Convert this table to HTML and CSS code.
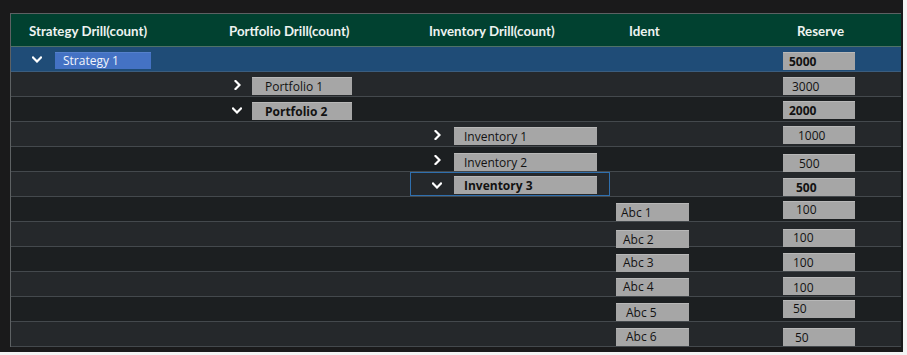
FILE: index.html
```html
<!DOCTYPE html>
<html>
<head>
<meta charset="utf-8">
<link rel="stylesheet" href="styles.css">
</head>
<body>
<div class="frame">
  <div class="grid">
    <div class="row head">
      <div class="c c1"><span class="htext">Strategy Drill(count)</span></div>
      <div class="c c2"><span class="htext">Portfolio Drill(count)</span></div>
      <div class="c c3"><span class="htext">Inventory Drill(count)</span></div>
      <div class="c c4"><span class="htext">Ident</span></div>
      <div class="c c5"><span class="htext">Reserve</span></div>
    </div>

    <div class="row strat">
      <div class="c c1"><span class="chev"><svg width="10" height="7" viewBox="0 0 10 7"><polyline points="1,1.5 5,5.5 9,1.5"/></svg></span><span class="box sbox">Strategy 1</span></div>
      <div class="c c2"></div>
      <div class="c c3"></div>
      <div class="c c4"></div>
      <div class="c c5"><span class="box rbox o5 b p6">5000</span></div>
    </div>

    <div class="row light">
      <div class="c c1"></div>
      <div class="c c2"><span class="chev"><svg width="7" height="10" viewBox="0 0 7 10"><polyline points="1.5,1 5.5,5 1.5,9"/></svg></span><span class="box pbox">Portfolio 1</span></div>
      <div class="c c3"></div>
      <div class="c c4"></div>
      <div class="c c5"><span class="box rbox o5 p9">3000</span></div>
    </div>

    <div class="row dark">
      <div class="c c1"></div>
      <div class="c c2"><span class="chev"><svg width="10" height="7" viewBox="0 0 10 7"><polyline points="1,1.5 5,5.5 9,1.5"/></svg></span><span class="box pbox b">Portfolio 2</span></div>
      <div class="c c3"></div>
      <div class="c c4"></div>
      <div class="c c5"><span class="box rbox o4 b p6">2000</span></div>
    </div>

    <div class="row light">
      <div class="c c1"></div>
      <div class="c c2"></div>
      <div class="c c3"><span class="chev"><svg width="7" height="10" viewBox="0 0 7 10"><polyline points="1.5,1 5.5,5 1.5,9"/></svg></span><span class="box ibox o5">Inventory 1</span></div>
      <div class="c c4"></div>
      <div class="c c5"><span class="box rbox o4 p15">1000</span></div>
    </div>

    <div class="row dark">
      <div class="c c1"></div>
      <div class="c c2"></div>
      <div class="c c3"><span class="chev"><svg width="7" height="10" viewBox="0 0 7 10"><polyline points="1.5,1 5.5,5 1.5,9"/></svg></span><span class="box ibox o6">Inventory 2</span></div>
      <div class="c c4"></div>
      <div class="c c5"><span class="box rbox o7 p16">500</span></div>
    </div>

    <div class="row light">
      <div class="c c1"></div>
      <div class="c c2"></div>
      <div class="c c3 selected"><span class="chev"><svg width="10" height="7" viewBox="0 0 10 7"><polyline points="1,1.5 5,5.5 9,1.5"/></svg></span><span class="box ibox o4 b">Inventory 3</span></div>
      <div class="c c4"></div>
      <div class="c c5"><span class="box rbox o6 b p13">500</span></div>
    </div>

    <div class="row dark">
      <div class="c c1"></div><div class="c c2"></div><div class="c c3"></div>
      <div class="c c4"><span class="box abox o6 p5">Abc 1</span></div>
      <div class="c c5"><span class="box rbox o4 p13 up">100</span></div>
    </div>
    <div class="row light">
      <div class="c c1"></div><div class="c c2"></div><div class="c c3"></div>
      <div class="c c4"><span class="box abox o8 p7">Abc 2</span></div>
      <div class="c c5"><span class="box rbox o7 p10 up">100</span></div>
    </div>
    <div class="row dark">
      <div class="c c1"></div><div class="c c2"></div><div class="c c3"></div>
      <div class="c c4"><span class="box abox o7 p7 up">Abc 3</span></div>
      <div class="c c5"><span class="box rbox o6 p10">100</span></div>
    </div>
    <div class="row light">
      <div class="c c1"></div><div class="c c2"></div><div class="c c3"></div>
      <div class="c c4"><span class="box abox o6 p7 up">Abc 4</span></div>
      <div class="c c5"><span class="box rbox o5 p10 down">100</span></div>
    </div>
    <div class="row dark">
      <div class="c c1"></div><div class="c c2"></div><div class="c c3"></div>
      <div class="c c4"><span class="box abox o6 p10">Abc 5</span></div>
      <div class="c c5"><span class="box rbox o3 p10 up">50</span></div>
    </div>
    <div class="row light">
      <div class="c c1"></div><div class="c c2"></div><div class="c c3"></div>
      <div class="c c4"><span class="box abox o6 p10 up">Abc 6</span></div>
      <div class="c c5"><span class="box rbox o6 p12">50</span></div>
    </div>
  </div>
</div>
</body>
</html>
```

FILE: styles.css
```css
html, body {
  margin: 0;
  padding: 0;
  background: #f4f4f4;
}

.frame {
  width: 903px;
  height: 352px;
  box-sizing: border-box;
  background: #1a1a1b;
  padding: 13px 2px 0 10px;
  font-family: "Open Sans", "Noto Sans", sans-serif;
}

.grid {
  border-left: 1px solid #5d6163;
  border-top: 1px solid #5d6163;
}

.row {
  display: grid;
  grid-template-columns: 199px 200px 200px 163px 1fr;
  height: 24px;
  border-bottom: 1px solid #44494d;
}

.row.head {
  height: 32px;
  background: #014130;
  border-bottom: 1px solid #4f7266;
}

.row.strat {
  background: #1f4c77;
  border-bottom: 1px solid #3b5d7e;
}

.row.light { background: #25282b; }
.row.dark { background: #1c1f21; }

.c {
  display: flex;
  align-items: flex-start;
  box-sizing: border-box;
  min-width: 0;
}

.head .c {
  align-items: center;
  padding-top: 1px;
}

.htext {
  color: #eef3f0;
  font-family: "Lato", "Open Sans", sans-serif;
  font-weight: 700;
  font-size: 13.3px;
}

.head .c1 { padding-left: 18px; }
.head .c2 { padding-left: 19px; }
.head .c3 { padding-left: 19px; }
.head .c4 { padding-left: 19px; }
.head .c5 { padding-left: 24px; }

.chev {
  display: flex;
  align-items: center;
  justify-content: center;
  width: 10px;
  height: 18px;
  margin-top: 4px;
}
.chev svg polyline {
  fill: none;
  stroke: #ffffff;
  stroke-width: 2.2;
  stroke-linecap: square;
}

.strat .c1 { padding-left: 21px; }
.strat .c1 .chev { margin-top: 3px; }
.c2 .chev { margin-left: 22px; }
.c3 .chev { margin-left: 22px; }

.box {
  display: block;
  box-sizing: border-box;
  height: 18px;
  line-height: 18px;
  font-size: 12px;
  color: #121212;
  background: #a6a6a6;
  border-top: 1px solid #b8b8b8;
  white-space: nowrap;
  margin-top: 5px;
}

.sbox {
  width: 96px;
  height: 17px;
  line-height: 16px;
  margin-left: 13px;
  padding-left: 8px;
  background: #4472c4;
  border-top: 1px solid #5580cc;
  color: #f2f5fb;
}

.pbox {
  width: 100px;
  margin-left: 10px;
  padding-left: 13px;
}

.ibox {
  width: 143px;
  margin-left: 12px;
  padding-left: 10px;
}

.abox {
  width: 73px;
  margin-left: 6px;
}

.rbox {
  width: 72px;
  margin-left: 10px;
}

.b { font-weight: 700; }

.o3 { margin-top: 3px; }
.o4 { margin-top: 4px; }
.o5 { margin-top: 5px; }
.o6 { margin-top: 6px; }
.o7 { margin-top: 7px; }
.o8 { margin-top: 8px; }

.p5 { padding-left: 5px; }
.p6 { padding-left: 6px; }
.p7 { padding-left: 7px; }
.p9 { padding-left: 9px; }
.p10 { padding-left: 10px; }
.p12 { padding-left: 12px; }
.p13 { padding-left: 13px; }
.p15 { padding-left: 15px; }
.p16 { padding-left: 16px; }

.up { line-height: 15px; }
.down { line-height: 20px; }

.selected {
  outline: 1px solid #2f6fae;
  outline-offset: -1px;
}
```
